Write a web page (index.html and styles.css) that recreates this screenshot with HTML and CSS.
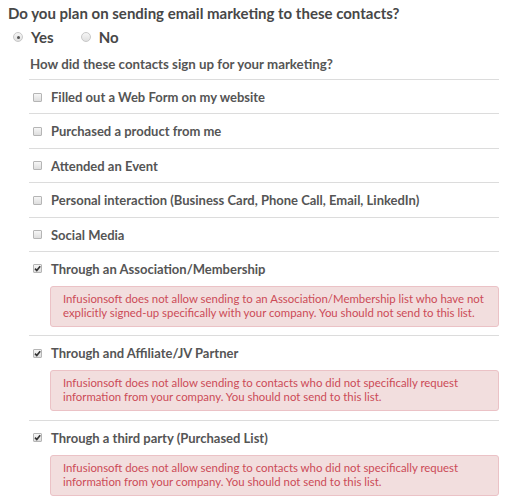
FILE: index.html
```html
<!DOCTYPE html>
<html>
<head>
<meta charset="utf-8">
<link rel="stylesheet" href="styles.css">
</head>
<body>
<div class="page">
  <div class="heading">Do you plan on sending email marketing to these contacts?</div>
  <div class="radios">
    <label class="radio"><span class="radio-dot checked"></span>Yes</label>
    <label class="radio"><span class="radio-dot"></span>No</label>
  </div>
  <div class="question">How did these contacts sign up for your marketing?</div>
  <ul class="options">
    <li class="option"><div class="opt-label"><span class="cb"></span>Filled out a Web Form on my website</div></li>
    <li class="option"><div class="opt-label"><span class="cb"></span>Purchased a product from me</div></li>
    <li class="option"><div class="opt-label"><span class="cb"></span>Attended an Event</div></li>
    <li class="option"><div class="opt-label"><span class="cb"></span>Personal interaction (Business Card, Phone Call, Email, LinkedIn)</div></li>
    <li class="option"><div class="opt-label"><span class="cb"></span>Social Media</div></li>
    <li class="option has-alert"><div class="opt-label"><span class="cb checked"><svg viewBox="0 0 9 9" width="9" height="9"><path d="M2 4.6 L3.8 6.6 L7.2 2.2" fill="none" stroke="#333" stroke-width="1.6"/></svg></span>Through an Association/Membership</div>
      <div class="alert">Infusionsoft does not allow sending to an Association/Membership list who have not explicitly signed-up specifically with your company. You should not send to this list.</div></li>
    <li class="option has-alert"><div class="opt-label"><span class="cb checked"><svg viewBox="0 0 9 9" width="9" height="9"><path d="M2 4.6 L3.8 6.6 L7.2 2.2" fill="none" stroke="#333" stroke-width="1.6"/></svg></span>Through and Affiliate/JV Partner</div>
      <div class="alert">Infusionsoft does not allow sending to contacts who did not specifically request information from your company. You should not send to this list.</div></li>
    <li class="option has-alert"><div class="opt-label"><span class="cb checked"><svg viewBox="0 0 9 9" width="9" height="9"><path d="M2 4.6 L3.8 6.6 L7.2 2.2" fill="none" stroke="#333" stroke-width="1.6"/></svg></span>Through a third party (Purchased List)</div>
      <div class="alert">Infusionsoft does not allow sending to contacts who did not specifically request information from your company. You should not send to this list.</div></li>
  </ul>
</div>
</body>
</html>
```
FILE: styles.css
```css
html, body {
  margin: 0;
  padding: 0;
  background: #fff;
}
.page {
  font-family: "Lato", "Liberation Sans", sans-serif;
  color: #555;
  padding: 4px 0 0 8px;
  width: 491px;
}
.heading {
  font-size: 15px;
  font-weight: 700;
  color: #474747;
  line-height: 18px;
}
.radios {
  display: flex;
  gap: 27px;
  margin-top: 6px;
  padding-left: 5px;
  height: 18px;
  align-items: center;
}
.radio {
  display: flex;
  align-items: center;
  gap: 8px;
  font-size: 15px;
  font-weight: 700;
  color: #474747;
}
.radio-dot {
  width: 10px;
  height: 10px;
  border-radius: 50%;
  border: 1px solid #c8c8c8;
  background: linear-gradient(#f6f6f6, #e0e0e0);
  box-sizing: border-box;
  position: relative;
}
.radio-dot.checked::after {
  content: "";
  position: absolute;
  left: 2.5px;
  top: 2.5px;
  width: 3px;
  height: 3px;
  border-radius: 50%;
  background: #555;
}
.question {
  margin: 10px 0 0 22px;
  font-size: 13.3px;
  font-weight: 700;
  line-height: 16px;
  color: #555;
}
.options {
  list-style: none;
  margin: 7px 0 0 21px;
  padding: 0;
}
.option {
  border-top: 1px solid #dcdcdc;
  padding: 9px 0 8.4px 4px;
}
.opt-label {
  display: flex;
  align-items: center;
  gap: 9px;
  font-size: 13px;
  font-weight: 700;
  line-height: 16px;
  color: #555;
}
.cb {
  width: 9px;
  height: 9px;
  border: 1px solid #b5b5b5;
  border-radius: 1px;
  background: linear-gradient(#f6f6f6, #dedede);
  box-sizing: border-box;
  display: inline-flex;
  align-items: center;
  justify-content: center;
  flex: none;
  position: relative;
}
.cb svg {
  position: absolute;
  left: -1px;
  top: -1px;
}
.alert {
  margin: 9px 0 0 17px;
  padding: 5px 12px 6px 12px;
  background: #f2dede;
  border: 1px solid #ebc2c6;
  border-radius: 3px;
  color: #cc4b57;
  font-size: 11.4px;
  line-height: 14px;
}
```
